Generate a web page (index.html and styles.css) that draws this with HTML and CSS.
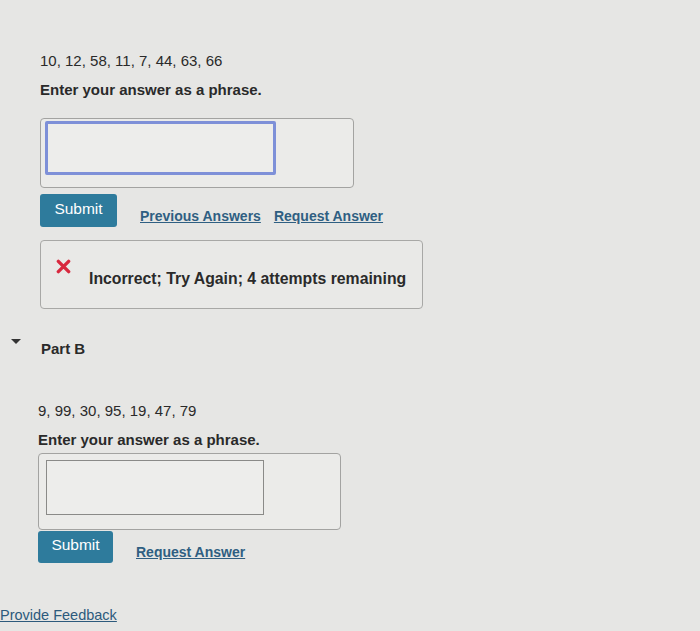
FILE: index.html
```html
<!DOCTYPE html>
<html>
<head>
<meta charset="utf-8">
<link rel="stylesheet" href="styles.css">
</head>
<body>
<div class="page">
  <section class="part part-a">
    <p class="values">10, 12, 58, 11, 7, 44, 63, 66</p>
    <p class="prompt">Enter your answer as a phrase.</p>
    <div class="answer-box box-a">
      <div class="input input-focus"></div>
    </div>
    <div class="actions">
      <button class="submit">Submit</button>
      <a class="link" href="#">Previous Answers</a>
      <a class="link" href="#">Request Answer</a>
    </div>
    <div class="feedback">
      <svg class="x-icon" viewBox="0 0 16 16" width="15" height="15">
        <path d="M2.5 2.5 L13.5 13.5 M13.5 2.5 L2.5 13.5" stroke="#d8283e" stroke-width="3.6" stroke-linecap="round"/>
      </svg>
      <span class="feedback-text">Incorrect; Try Again; 4 attempts remaining</span>
    </div>
  </section>

  <div class="part-header">
    <span class="caret"></span>
    <span class="part-title">Part B</span>
  </div>

  <section class="part part-b">
    <p class="values">9, 99, 30, 95, 19, 47, 79</p>
    <p class="prompt">Enter your answer as a phrase.</p>
    <div class="answer-box box-b">
      <div class="input input-plain"></div>
    </div>
    <div class="actions actions-b">
      <button class="submit">Submit</button>
      <a class="link" href="#">Request Answer</a>
    </div>
  </section>

  <a class="link feedback-link" href="#">Provide Feedback</a>
</div>
</body>
</html>
```

FILE: styles.css
```css
html, body {
  margin: 0;
  padding: 0;
}
body {
  background: #e6e6e4;
  font-family: "Liberation Sans", Arial, sans-serif;
  color: #2a2a2a;
  width: 700px;
  height: 631px;
  overflow: hidden;
}
.page {
  display: flex;
  flex-direction: column;
}
.part {
  display: flex;
  flex-direction: column;
  align-items: flex-start;
}
.part-a {
  padding: 52px 0 0 40px;
}
.values {
  margin: 0;
  font-size: 15px;
  line-height: 18px;
}
.prompt {
  margin: 11px 0 0;
  font-size: 15px;
  font-weight: bold;
  line-height: 18px;
}
.answer-box {
  border: 1px solid #a3a3a1;
  border-radius: 4px;
  background: #ebebe9;
  box-sizing: border-box;
}
.box-a {
  margin-top: 19px;
  width: 314px;
  height: 70px;
  padding: 2px 4px;
}
.input {
  box-sizing: border-box;
  background: #ededeb;
}
.input-focus {
  width: 231px;
  height: 54px;
  border: 3px solid #7e90d8;
  border-radius: 2px;
}
.actions {
  display: flex;
  align-items: center;
  margin-top: 6px;
}
.submit {
  background: #2e7b9c;
  color: #fff;
  border: none;
  border-radius: 3px;
  width: 77px;
  height: 33px;
  font-family: inherit;
  font-size: 15.5px;
  padding: 0 0 4px;
  margin: 0;
}
.link {
  color: #2f5f82;
  text-decoration: underline;
  font-weight: bold;
  font-size: 14px;
  margin-left: 23px;
  margin-top: 10px;
}
.actions .link + .link {
  margin-left: 13px;
}
.feedback {
  margin-top: 13px;
  width: 383px;
  height: 69px;
  box-sizing: border-box;
  border: 1px solid #a8a8a6;
  border-radius: 4px;
  background: #e9e9e7;
  display: flex;
  align-items: center;
  padding: 0 0 0 15px;
}
.x-icon {
  flex: none;
  margin-top: -16px;
}
.feedback-text {
  font-weight: bold;
  font-size: 15.8px;
  margin-left: 18px;
  margin-top: 8px;
}
.part-header {
  display: flex;
  align-items: center;
  margin-top: 29px;
  padding-left: 11px;
  height: 20px;
}
.caret {
  width: 0;
  height: 0;
  border-left: 5px solid transparent;
  border-right: 5px solid transparent;
  border-top: 5px solid #333;
  margin-top: -14px;
}
.part-title {
  font-weight: bold;
  font-size: 15px;
  margin-left: 20px;
  margin-top: 0;
}
.part-b {
  padding: 44px 0 0 38px;
}
.part-b .prompt {
  margin-top: 11px;
}
.box-b {
  margin-top: 4px;
  width: 303px;
  height: 77px;
  padding: 6px 7px;
}
.input-plain {
  width: 218px;
  height: 55px;
  border: 1.5px solid #8a8a88;
}
.actions-b {
  margin-top: 1px;
}
.actions-b .submit {
  width: 75px;
  height: 32px;
}
.feedback-link {
  margin: 44px 0 0 0;
  align-self: flex-start;
  font-weight: normal;
  font-size: 14.5px;
  color: #2d5a7c;
}
```
